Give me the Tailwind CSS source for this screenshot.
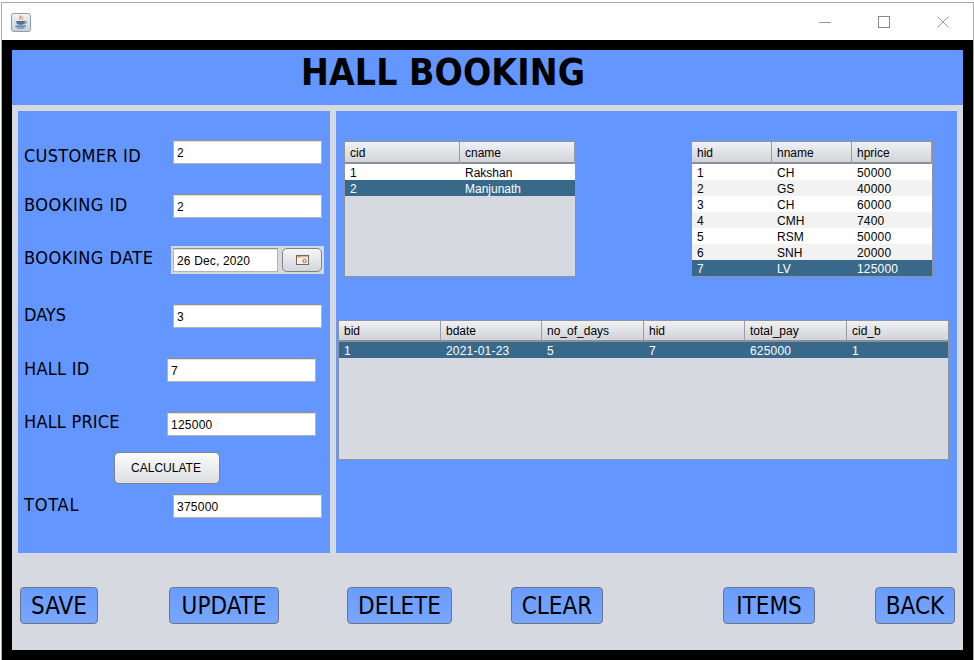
<!DOCTYPE html>
<html>
<head>
<meta charset="utf-8">
<script src="https://cdn.jsdelivr.net/npm/@tailwindcss/browser@4"></script>
</head>
<body class="bg-white">
<div class="w-[974px] h-[660px] overflow-hidden font-['Liberation_Sans',Arial,sans-serif] text-black">
  <div class="ml-[1px] mt-[2px] w-[973px] h-[658px] border-l border-t border-r border-[#a9a9a9] flex flex-col">
    <!-- title bar -->
    <div class="h-[37px] bg-white flex items-center shrink-0">
      <svg class="ml-[9px] mt-[1px]" width="20" height="19" viewBox="0 0 21 20">
        <defs><linearGradient id="ic" x1="0" y1="0" x2="0" y2="1"><stop offset="0" stop-color="#f1f3f6"/><stop offset="1" stop-color="#c5d0dc"/></linearGradient></defs>
        <rect x="0.5" y="0.5" width="20" height="19" rx="2.5" fill="url(#ic)" stroke="#8598ab"/>
        <path d="M10.5 2c2 2-1.600 3.200-.4 5.600-2-1.200-1.800-3.200.4-5.600zM13 4.300c.5 1.300-1.600 1.700-1 3.300-1.300-.8-.8-2.100 1-3.300z" fill="#e8792b"/>
        <path d="M5.500 8.400h9v1c0 1.800-1.600 3-4.500 3s-4.500-1.200-4.500-3z" fill="#4d7391"/>
        <path d="M14.500 9h1.400c1 0 1 2-2.200 2.400" fill="none" stroke="#4d7391" stroke-width=".9"/>
        <path d="M4.500 13.800h11M6 15.800h8" stroke="#4d7391" stroke-width="1.100"/>
      </svg>
      <div class="ml-auto flex items-center">
        <svg width="12" height="12" viewBox="0 0 12 12"><path d="M0 6.500h12" stroke="#9a9a9a"/></svg>
        <svg class="ml-[47px]" width="12" height="12" viewBox="0 0 12 12"><rect x="0.500" y="0.500" width="11" height="11" fill="none" stroke="#8a8a8a"/></svg>
        <svg class="ml-[47px] mr-[24px]" width="12" height="12" viewBox="0 0 12 12"><path d="M0.500 0.500l11 11M11.500 0.500l-11 11" stroke="#9a9a9a"/></svg>
      </div>
    </div>
    <!-- black frame -->
    <div class="flex-1 bg-black pt-[10px] px-[10px] pb-[10px] flex flex-col min-h-0">
      <div class="flex-1 bg-[#d6d9df] flex flex-col">
        <div class="h-[55px] bg-[#6496ff] pl-[289px] flex items-center shrink-0">
          <h1 class="font-['DejaVu_Sans_Condensed','DejaVu_Sans',sans-serif] font-bold text-[37px] tracking-[0.1px] leading-[44px] mt-[-10px] whitespace-nowrap">HALL BOOKING</h1>
        </div>
        <div class="flex pt-[6px] pl-[6px] gap-[6px]">
          <!-- left form -->
          <div class="w-[312px] h-[442px] bg-[#6496ff] pl-[6px] pt-[29px] font-['DejaVu_Sans_Condensed','DejaVu_Sans',sans-serif]">
            <div class="flex h-[24px]">
              <span class="w-[149px] text-[18px] tracking-[0.27px] leading-[22px] mt-[5px] whitespace-nowrap">CUSTOMER ID</span>
              <div class="w-[149px] h-[24px] bg-white border border-[#b3b3b3] border-t-[#8f8f8f] shadow-[inset_0_1px_0_#e0e0e0] pl-[3px] text-[12px] tracking-[0.25px] leading-[24px] font-['Liberation_Sans',sans-serif]">2</div>
            </div>
            <div class="flex h-[24px] mt-[30px]">
              <span class="w-[149px] text-[18px] tracking-[0.5px] leading-[22px] whitespace-nowrap">BOOKING ID</span>
              <div class="w-[149px] h-[24px] bg-white border border-[#b3b3b3] border-t-[#8f8f8f] shadow-[inset_0_1px_0_#e0e0e0] pl-[3px] text-[12px] tracking-[0.25px] leading-[24px] font-['Liberation_Sans',sans-serif]">2</div>
            </div>
            <div class="flex h-[28px] mt-[28px]">
              <span class="w-[147px] text-[18px] tracking-[0.5px] leading-[22px] mt-[1px] whitespace-nowrap">BOOKING DATE</span>
              <div class="w-[153px] h-[28px] bg-[#d6d9df] flex items-center pl-[2px] font-['Liberation_Sans',sans-serif]">
                <div class="w-[105px] h-[24px] bg-white border border-[#b3b3b3] border-t-[#8f8f8f] shadow-[inset_0_1px_0_#e0e0e0] pl-[3px] text-[12px] tracking-[0.15px] leading-[24px] whitespace-nowrap">26 Dec, 2020</div>
                <div class="ml-[4px] w-[40px] h-[24px] rounded-[5px] border border-[#7f8389] bg-gradient-to-b from-[#f5f6f7] to-[#d3d6db] flex items-center justify-center">
                  <svg width="13" height="10" viewBox="0 0 13 10"><rect x="0.500" y="0.500" width="12" height="9" fill="#f4f1ea" stroke="#6f6a60"/><rect x="1" y="1" width="4" height="1.500" fill="#d8a23c"/><rect x="5" y="1" width="7" height="1.500" fill="#c9c2b2"/><circle cx="8.500" cy="6" r="1.700" fill="none" stroke="#d44a4a"/></svg>
                </div>
              </div>
            </div>
            <div class="flex h-[24px] mt-[30px]">
              <span class="w-[149px] text-[18px] leading-[22px] whitespace-nowrap">DAYS</span>
              <div class="w-[149px] h-[24px] bg-white border border-[#b3b3b3] border-t-[#8f8f8f] shadow-[inset_0_1px_0_#e0e0e0] pl-[3px] text-[12px] tracking-[0.25px] leading-[24px] font-['Liberation_Sans',sans-serif]">3</div>
            </div>
            <div class="flex h-[24px] mt-[30px]">
              <span class="w-[143px] text-[18px] tracking-[0.25px] leading-[22px] whitespace-nowrap">HALL ID</span>
              <div class="w-[149px] h-[24px] bg-white border border-[#b3b3b3] border-t-[#8f8f8f] shadow-[inset_0_1px_0_#e0e0e0] pl-[3px] text-[12px] tracking-[0.25px] leading-[24px] font-['Liberation_Sans',sans-serif]">7</div>
            </div>
            <div class="flex h-[24px] mt-[30px]">
              <span class="w-[143px] text-[18px] tracking-[0.2px] leading-[22px] mt-[-1px] whitespace-nowrap">HALL PRICE</span>
              <div class="w-[149px] h-[24px] bg-white border border-[#b3b3b3] border-t-[#8f8f8f] shadow-[inset_0_1px_0_#e0e0e0] pl-[3px] text-[12px] tracking-[0.25px] leading-[24px] font-['Liberation_Sans',sans-serif]">125000</div>
            </div>
            <button class="block ml-[90px] mt-[16px] w-[106px] h-[32px] pr-[2px] rounded-[5px] border border-[#7f8389] bg-gradient-to-b from-[#fbfbfb] to-[#dcdee2] text-[12px] font-['Liberation_Sans',sans-serif]">CALCULATE</button>
            <div class="flex h-[24px] mt-[10px]">
              <span class="w-[149px] text-[18px] tracking-[0.8px] leading-[22px] whitespace-nowrap">TOTAL</span>
              <div class="w-[149px] h-[24px] bg-white border border-[#b3b3b3] border-t-[#8f8f8f] shadow-[inset_0_1px_0_#e0e0e0] pl-[3px] text-[12px] tracking-[0.25px] leading-[24px] font-['Liberation_Sans',sans-serif]">375000</div>
            </div>
          </div>
          <!-- right panel -->
          <div class="w-[621px] h-[442px] bg-[#6496ff] pl-[2px] pt-[30px] text-[12px]">
            <div class="flex pl-[6px]">
              <!-- customers -->
              <div class="w-[232px] h-[136px] bg-[#d6d9df] border border-[#909398]">
                <div class="grid grid-cols-[115px_1fr] h-[22px] border-b-2 border-[#8c8f94] bg-gradient-to-b from-[#f0f1f3] to-[#d0d3d9] leading-[22px]">
                  <div class="pl-[5px] border-r border-[#9a9da2]">cid</div>
                  <div class="pl-[5px] border-r border-[#9a9da2]">cname</div>
                </div>
                <div class="grid grid-cols-[115px_1fr] h-[16px] bg-white leading-[18px]"><div class="pl-[5px]">1</div><div class="pl-[5px]">Rakshan</div></div>
                <div class="grid grid-cols-[115px_1fr] h-[16px] bg-[#39698a] text-white leading-[18px]"><div class="pl-[5px]">2</div><div class="pl-[5px]">Manjunath</div></div>
              </div>
              <!-- halls -->
              <div class="ml-[115px] w-[242px] h-[136px] bg-[#d6d9df] border border-[#909398]">
                <div class="grid grid-cols-[80px_80px_1fr] h-[22px] border-b-2 border-[#8c8f94] bg-gradient-to-b from-[#f0f1f3] to-[#d0d3d9] leading-[22px]">
                  <div class="pl-[5px] border-r border-[#9a9da2]">hid</div>
                  <div class="pl-[5px] border-r border-[#9a9da2]">hname</div>
                  <div class="pl-[5px] border-r border-[#9a9da2]">hprice</div>
                </div>
                <div class="grid grid-cols-[80px_80px_1fr] h-[16px] bg-white leading-[18px]"><div class="pl-[5px]">1</div><div class="pl-[5px]">CH</div><div class="pl-[5px] tracking-[0.2px]">50000</div></div>
                <div class="grid grid-cols-[80px_80px_1fr] h-[16px] bg-[#f2f2f2] leading-[18px]"><div class="pl-[5px]">2</div><div class="pl-[5px]">GS</div><div class="pl-[5px] tracking-[0.2px]">40000</div></div>
                <div class="grid grid-cols-[80px_80px_1fr] h-[16px] bg-white leading-[18px]"><div class="pl-[5px]">3</div><div class="pl-[5px]">CH</div><div class="pl-[5px] tracking-[0.2px]">60000</div></div>
                <div class="grid grid-cols-[80px_80px_1fr] h-[16px] bg-[#f2f2f2] leading-[18px]"><div class="pl-[5px]">4</div><div class="pl-[5px]">CMH</div><div class="pl-[5px] tracking-[0.2px]">7400</div></div>
                <div class="grid grid-cols-[80px_80px_1fr] h-[16px] bg-white leading-[18px]"><div class="pl-[5px]">5</div><div class="pl-[5px]">RSM</div><div class="pl-[5px] tracking-[0.2px]">50000</div></div>
                <div class="grid grid-cols-[80px_80px_1fr] h-[16px] bg-[#f2f2f2] leading-[18px]"><div class="pl-[5px]">6</div><div class="pl-[5px]">SNH</div><div class="pl-[5px] tracking-[0.2px]">20000</div></div>
                <div class="grid grid-cols-[80px_80px_1fr] h-[16px] bg-[#39698a] text-white leading-[18px]"><div class="pl-[5px]">7</div><div class="pl-[5px]">LV</div><div class="pl-[5px] tracking-[0.2px]">125000</div></div>
              </div>
            </div>
            <!-- bookings -->
            <div class="mt-[43px] w-[611px] h-[140px] bg-[#d6d9df] border border-[#909398]">
              <div class="grid grid-cols-[102px_101px_102px_101px_102px_1fr] h-[21px] border-b-2 border-[#8c8f94] bg-gradient-to-b from-[#f0f1f3] to-[#d0d3d9] leading-[20px]">
                <div class="pl-[5px] border-r border-[#9a9da2]">bid</div>
                <div class="pl-[5px] border-r border-[#9a9da2]">bdate</div>
                <div class="pl-[5px] border-r border-[#9a9da2]">no_of_days</div>
                <div class="pl-[5px] border-r border-[#9a9da2]">hid</div>
                <div class="pl-[5px] border-r border-[#9a9da2]">total_pay</div>
                <div class="pl-[5px]">cid_b</div>
              </div>
              <div class="grid grid-cols-[102px_101px_102px_101px_102px_1fr] h-[16px] bg-[#39698a] text-white leading-[18px]">
                <div class="pl-[5px]">1</div><div class="pl-[5px] tracking-[0.2px]">2021-01-23</div><div class="pl-[5px]">5</div><div class="pl-[5px]">7</div><div class="pl-[5px] tracking-[0.2px]">625000</div><div class="pl-[5px]">1</div>
              </div>
            </div>
          </div>
        </div>
        <!-- action buttons -->
        <div class="flex pt-[34px] pl-[8px] font-['DejaVu_Sans_Condensed','DejaVu_Sans',sans-serif] text-[24px]">
          <button class="w-[78px] h-[37px] rounded-[4px] border border-[#6a7688] bg-gradient-to-b from-[#6a9cff] to-[#78a6ff]">SAVE</button>
          <button class="ml-[71px] w-[110px] h-[37px] rounded-[4px] border border-[#6a7688] bg-gradient-to-b from-[#6a9cff] to-[#78a6ff]">UPDATE</button>
          <button class="ml-[68px] w-[105px] h-[37px] rounded-[4px] border border-[#6a7688] bg-gradient-to-b from-[#6a9cff] to-[#78a6ff]">DELETE</button>
          <button class="ml-[59px] w-[92px] h-[37px] rounded-[4px] border border-[#6a7688] bg-gradient-to-b from-[#6a9cff] to-[#78a6ff]">CLEAR</button>
          <button class="ml-[120px] w-[92px] h-[37px] rounded-[4px] border border-[#6a7688] bg-gradient-to-b from-[#6a9cff] to-[#78a6ff]">ITEMS</button>
          <button class="ml-[60px] w-[80px] h-[37px] rounded-[4px] border border-[#6a7688] bg-gradient-to-b from-[#6a9cff] to-[#78a6ff]">BACK</button>
        </div>
      </div>
    </div>
  </div>
</div>
</body>
</html>
